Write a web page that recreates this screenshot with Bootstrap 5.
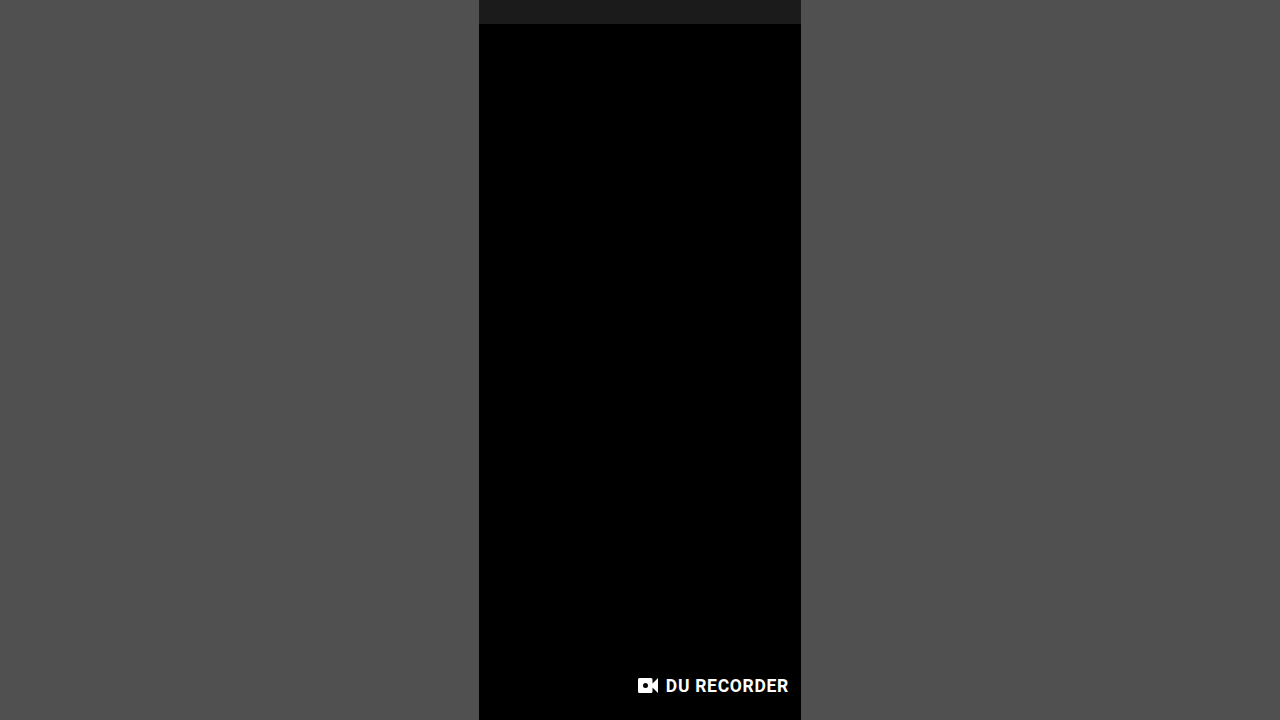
<!DOCTYPE html>
<html lang="en">
<head>
<meta charset="utf-8">
<title>DU Recorder</title>
<link rel="stylesheet" href="https://cdn.jsdelivr.net/npm/bootstrap@5.3.0/dist/css/bootstrap.min.css">
<style>
html, body { height: 720px; overflow: hidden; background: #505050; }
.stage { height: 720px; }
.phone { width: 322px; height: 720px; background: #000; }
.status-strip { height: 24px; background: #1b1b1b; }
.mark-row { padding: 0 12px 24px 0; }
.mark-text { font-family: Roboto, "Liberation Sans", sans-serif; font-weight: 700; font-size: 17.5px; line-height: 20px; color: #fff; margin-left: 8px; letter-spacing: .7px; white-space: nowrap; }
.mark-icon { display: block; width: 20px; height: 15px; margin-top: -1px; }
</style>
</head>
<body>
<div class="stage d-flex justify-content-center">
  <div class="phone d-flex flex-column">
    <div class="status-strip"></div>
    <div class="flex-grow-1"></div>
    <div class="mark-row d-flex justify-content-end align-items-center">
      <svg class="mark-icon" viewBox="0 0 20 15" aria-hidden="true">
        <path fill="#fff" fill-rule="evenodd" d="M1.500 0H13A1.500 1.500 0 0 1 14.500 1.500V5.500L20 0V15L14.500 9.500V13.500A1.500 1.500 0 0 1 13 15H1.500A1.500 1.500 0 0 1 0 13.500V1.500A1.500 1.500 0 0 1 1.500 0ZM7.500 5A2.500 2.500 0 1 0 7.500 10A2.500 2.500 0 1 0 7.500 5Z"/>
      </svg>
      <span class="mark-text">DU RECORDER</span>
    </div>
  </div>
</div>
<script src="https://cdn.jsdelivr.net/npm/bootstrap@5.3.0/dist/js/bootstrap.bundle.min.js"></script>
</body>
</html>
